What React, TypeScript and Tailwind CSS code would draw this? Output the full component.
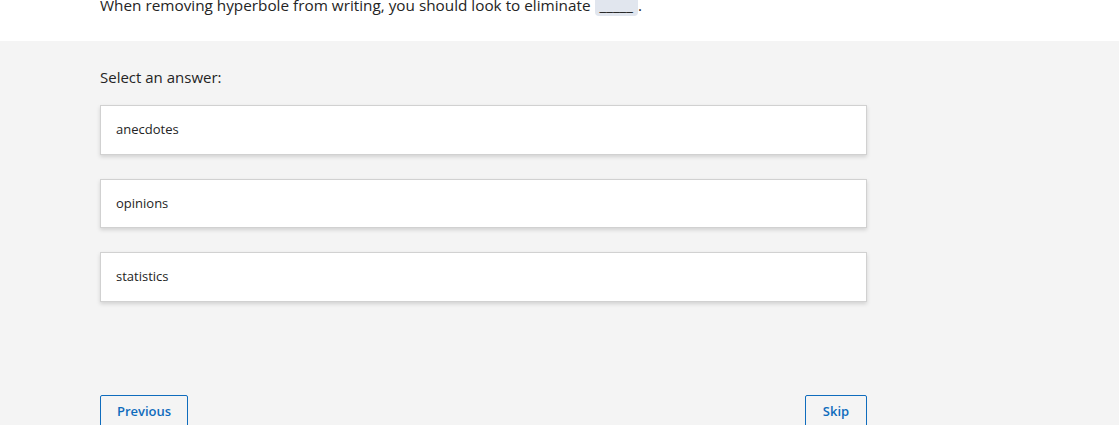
const answers = ["anecdotes", "opinions", "statistics"];

const App = () => {
  return (
    <div
      className="min-h-screen w-full bg-[#f4f4f4] text-[#242424]"
      style={{ fontFamily: '"Open Sans", "Noto Sans", Arial, sans-serif' }}
    >
      <div className="h-[41px] bg-white overflow-hidden">
        <div className="pl-[100px] -mt-[7px] text-[15.3px] leading-6 text-[#242424]">
          When removing hyperbole from writing, you should look to eliminate{" "}
          <span className="inline-block rounded bg-[#e1e6ee] px-[5px] leading-[22px] text-[#242424]">
            _____
          </span>
          .
        </div>
      </div>

      <div className="w-[767px] ml-[100px] pt-[26px]">
        <p className="text-[15px] leading-5 mb-[18px]">Select an answer:</p>

        <div className="flex flex-col gap-[24px]">
          {answers.map((a) => (
            <div
              key={a}
              className="h-[49.5px] flex items-center px-[15px] bg-white border border-[#d1d1d1] shadow-[0_2px_4px_rgba(0,0,0,0.14)] text-[13px]"
            >
              {a}
            </div>
          ))}
        </div>

        <div className="flex justify-between mt-[93px]">
          <button className="h-[34px] w-[88px] border border-[#0f6cbd] rounded-[2px] text-[#0f6cbd] font-semibold text-[13px] bg-transparent">
            Previous
          </button>
          <button className="h-[34px] w-[62px] border border-[#0f6cbd] rounded-[2px] text-[#0f6cbd] font-semibold text-[13px] bg-transparent">
            Skip
          </button>
        </div>
      </div>
    </div>
  );
};

export default App;
